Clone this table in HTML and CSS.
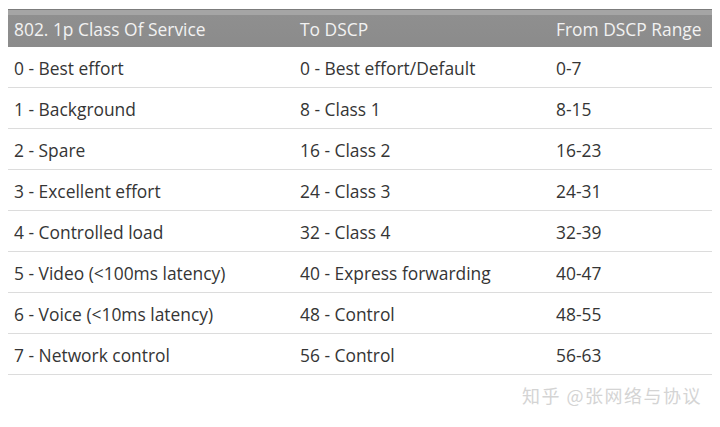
FILE: index.html
```html
<!DOCTYPE html>
<html lang="en">
<head>
<meta charset="utf-8">
<link rel="stylesheet" href="styles.css">
</head>
<body>
<div class="page">
  <div class="table">
    <div class="row head">
      <div class="c1">802. 1p Class Of Service</div>
      <div class="c2">To DSCP</div>
      <div class="c3">From DSCP Range</div>
    </div>
    <div class="row"><div class="c1">0 - Best effort</div><div class="c2">0 - Best effort/Default</div><div class="c3">0-7</div></div>
    <div class="row"><div class="c1">1 - Background</div><div class="c2">8 - Class 1</div><div class="c3">8-15</div></div>
    <div class="row"><div class="c1">2 - Spare</div><div class="c2">16 - Class 2</div><div class="c3">16-23</div></div>
    <div class="row"><div class="c1">3 - Excellent effort</div><div class="c2">24 - Class 3</div><div class="c3">24-31</div></div>
    <div class="row"><div class="c1">4 - Controlled load</div><div class="c2">32 - Class 4</div><div class="c3">32-39</div></div>
    <div class="row"><div class="c1">5 - Video (&lt;100ms latency)</div><div class="c2">40 - Express forwarding</div><div class="c3">40-47</div></div>
    <div class="row"><div class="c1">6 - Voice (&lt;10ms latency)</div><div class="c2">48 - Control</div><div class="c3">48-55</div></div>
    <div class="row"><div class="c1">7 - Network control</div><div class="c2">56 - Control</div><div class="c3">56-63</div></div>
  </div>
  <div class="mark">知乎 @张网络与协议</div>
</div>
</body>
</html>
```
FILE: styles.css
```css
html, body { margin: 0; padding: 0; background: #fff; }
.page { width: 720px; height: 427px; padding: 9px 8px 0 8px; box-sizing: border-box; font-family: "Open Sans", "Noto Sans", sans-serif; }
.table { display: flex; flex-direction: column; }
.row { display: grid; grid-template-columns: 286px 256px 1fr; height: 41px; align-items: center; border-bottom: 1px solid #dcdcdc; box-sizing: border-box; font-size: 17.4px; color: #353535; padding-left: 6px; }
.row > div { padding-top: 1px; white-space: nowrap; }
.row.head { height: 38px; background: linear-gradient(#a5a5a5 0, #a5a5a5 5px, #8f8f8f 5px, #8b8b8b 100%); border-top: 1px solid #7c7c7c; border-bottom: none; color: #f2f2f2; }
.row.head > div { padding-top: 0; }
.mark { text-align: right; padding-right: 10px; margin-top: 7px; font-family: "Noto Sans CJK SC", sans-serif; font-size: 18px; color: #d4d4d4; letter-spacing: 1.5px; }
```
